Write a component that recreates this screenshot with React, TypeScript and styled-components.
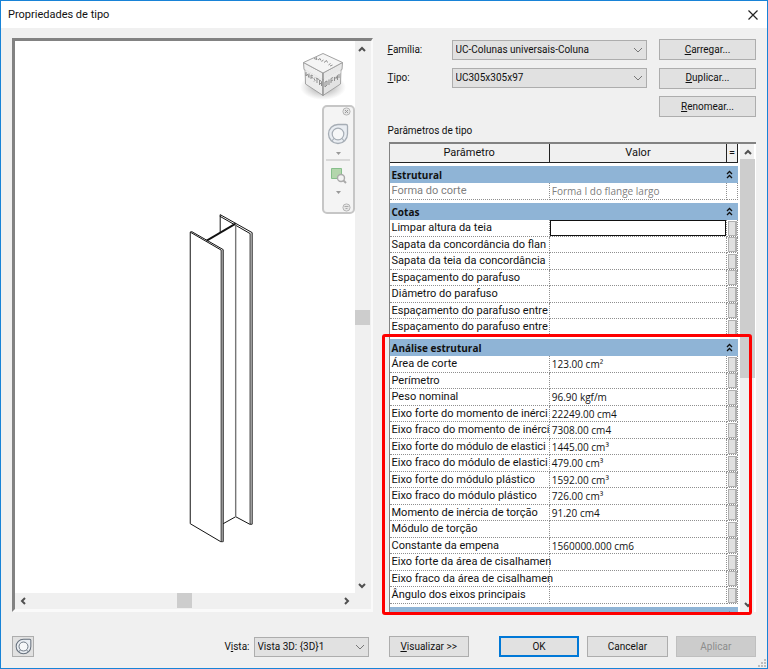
import React from "react";
import styled, { createGlobalStyle, css } from "styled-components";

const GlobalStyle = createGlobalStyle`
  *, *::before, *::after { box-sizing: border-box; }
  html, body { margin: 0; padding: 0; }
  body { background: #f0f0f0; color: #111; font: 10px/14px Roboto, "Liberation Sans", sans-serif; }
  button, select, input { font: inherit; color: inherit; margin: 0; padding: 0; border-radius: 0; }
`;

const Dialog = styled.main`
  display: flex;
  flex-direction: column;
  height: 100vh;
  background: #f0f0f0;
  border: 1px solid #1883d7;
  position: relative;
`;

const TitleBar = styled.header`
  display: flex;
  align-items: center;
  justify-content: space-between;
  flex: none;
  height: 27px;
  padding: 0 8px 0 7px;
  background: #fff;
`;

const Title = styled.h1`
  margin: 0;
  font: 400 11px/16px Roboto, "Liberation Sans", sans-serif;
`;

const PlainButton = styled.button`
  display: flex;
  align-items: center;
  justify-content: center;
  border: 0;
  background: none;
`;

const Body = styled.div`
  display: grid;
  grid-template-columns: minmax(0, 361fr) minmax(0, 369fr);
  column-gap: 15px;
  flex: 1;
  min-height: 0;
  padding: 10px 11px 0 11px;
`;

const Preview = styled.section`
  display: grid;
  grid-template-columns: minmax(0, 1fr) 16px;
  grid-template-rows: minmax(0, 1fr) 16px;
  min-height: 0;
  border-style: solid;
  border-width: 3px 2px 3px 3px;
  border-color: #828282 #fafafa #fafafa #828282;
`;

const Viewport = styled.div`
  position: relative;
  min-width: 0;
  min-height: 0;
  background: #fff;
`;

const Drawing = styled.svg`
  display: block;
  width: 100%;
  height: 100%;
`;

const ViewCube = styled.svg`
  position: absolute;
  top: 8px;
  right: 8px;
`;

const NavBar = styled.nav`
  position: absolute;
  top: 64px;
  right: 0;
  display: flex;
  flex-direction: column;
  align-items: center;
  width: 33px;
  height: 109px;
  border: 2px solid #c6c6c6;
  border-radius: 5px;
  background: #f4f4f4;
`;

const NavCorner = styled(PlainButton)`
  align-self: flex-end;
  width: 9px;
  height: 9px;
  margin: 0 2px;
`;

const NavTool = styled(PlainButton)<{ $gap: number }>`
  margin-top: ${(p) => p.$gap}px;
`;

const NavRule = styled.hr`
  width: 24px;
  height: 2px;
  margin: 4px 0 6px;
  border: 0;
  background: #d8d8d8;
`;

const Spacer = styled.div`
  flex: 1;
`;

const Track = styled.div<{ $axis: "x" | "y" }>`
  display: flex;
  flex-direction: ${(p) => (p.$axis === "x" ? "row" : "column")};
  min-height: 0;
  background: #f0f0f0;
`;

const ArrowButton = styled(PlainButton)`
  flex: none;
  width: 15px;
  height: 15px;
`;

const Gap = styled.div<{ $grow: number }>`
  flex: ${(p) => p.$grow} 1 0;
`;

const Thumb = styled.div<{ $grow?: number }>`
  flex: ${(p) => (p.$grow ? `${p.$grow} 1 0` : "none")};
  width: 15px;
  height: 15px;
  background: #cdcdcd;
`;

const Settings = styled.section`
  display: flex;
  flex-direction: column;
  min-width: 0;
  min-height: 0;
`;

const Form = styled.div`
  display: grid;
  grid-template-columns: 64px minmax(0, 1fr) 97px;
  grid-template-rows: 21px 20px 21px;
  column-gap: 12px;
  row-gap: 8px;
  align-items: center;
  margin-top: 1px;
`;

const FieldLabel = styled.label`
  white-space: nowrap;
`;

const controlBox = css`
  border: 1px solid #adadad;
  background: #e1e1e1;
`;

const SelectWrap = styled.div<{ $wide?: boolean }>`
  display: grid;
  align-items: center;
  ${(p) => (p.$wide ? "margin-left: -12px;" : "width: 115px;")}

  > * { grid-area: 1 / 1; }
  > svg { justify-self: end; margin-right: 4px; pointer-events: none; }
`;

const Select = styled.select`
  ${controlBox}
  appearance: none;
  width: 100%;
  height: 20px;
  padding: 0 18px 0 3px;
  text-overflow: ellipsis;
`;

const PushButton = styled.button<{ $kind?: "default" | "normal" }>`
  ${controlBox}
  height: 21px;
  text-align: center;
  white-space: nowrap;
  ${(p) => p.$kind === "default" && "border: 2px solid #0078d7;"}

  &:disabled {
    border-color: #bfbfbf;
    background: #ccc;
    color: #8c8c8c;
  }
`;

const FormButton = styled(PushButton)`
  grid-column: 3;
`;

const Caption = styled.h2`
  margin: 7px 0 4px;
  font: 400 10px/14px Roboto, "Liberation Sans", sans-serif;
`;

const GridBox = styled.div`
  position: relative;
  display: grid;
  grid-template-columns: minmax(0, 1fr) 18px;
  flex: 1;
  min-height: 0;
  margin-left: 1px;
  border-style: solid;
  border-width: 2px 0 0 1px;
  border-color: #828282;
  background: #fff;
`;

const GridClip = styled.div`
  min-height: 0;
  overflow: hidden;
`;

const GridTrack = styled(Track)`
  width: 14px;
  margin-left: 2px;
`;

const Table = styled.table`
  width: 100%;
  table-layout: fixed;
  border-collapse: separate;
  border-spacing: 0;
  white-space: nowrap;
`;

const HeadCell = styled.th`
  height: 19px;
  padding: 0;
  border-right: 1px solid #222;
  border-bottom: 1px solid #222;
  background: #f0f0f0;
  font: 400 11px/16px Roboto, "Liberation Sans", sans-serif;
`;

const Group = styled.tbody`
  tr:nth-child(even) td { height: 17px; }
  tr:nth-child(odd) td { height: 16px; }
`;

const GroupHead = styled.th`
  height: 20px;
  padding: 0 2px;
  border-top: 3px solid #fff;
  background: #8fb4d6;
  text-align: left;
  font: 700 10px/16px "Open Sans", "Noto Sans", sans-serif;

  > div { display: flex; justify-content: space-between; align-items: center; }
`;

const FoldButton = styled(PlainButton)`
  width: 13px;
  height: 16px;
`;

const Cell = styled.td<{ $muted?: boolean; $value?: boolean }>`
  padding: 0 0 0 2px;
  border-right: 1px dotted #8f8f8f;
  border-bottom: 1px dotted #8f8f8f;
  color: ${(p) => (p.$muted ? "#808080" : "#111")};
  font: ${(p) =>
    p.$value
      ? '400 10px/14px "Open Sans", "Noto Sans", sans-serif'
      : '400 11px/14px Roboto, "Liberation Sans", sans-serif'};
`;

const EditCell = styled(Cell)`
  padding: 0;
`;

const ValueInput = styled.input`
  display: block;
  width: 100%;
  height: 16px;
  padding: 0 2px;
  border: 1px solid #111;
  background: #fff;
  outline: none;
`;

const LinkCell = styled.td`
  padding: 0;
  border-right: 1px dotted #8f8f8f;
  border-bottom: 1px dotted #8f8f8f;
`;

const LinkButton = styled.button`
  display: block;
  width: 9px;
  height: 15px;
  margin-left: 1px;
  border: 1px solid #b0b0b0;
  border-right-width: 2px;
  background: #e1e1e1;
`;

const Highlight = styled.div`
  position: absolute;
  top: 190px;
  right: 4px;
  bottom: -3px;
  left: -8px;
  border: 3px solid #fe0000;
  border-radius: 3px;
  pointer-events: none;
`;

const Footer = styled.footer`
  display: grid;
  grid-template-columns: minmax(0, 361fr) minmax(0, 369fr);
  column-gap: 15px;
  align-items: center;
  flex: none;
  padding: 24px 11px 11px 11px;
`;

const FooterLeft = styled.div`
  display: flex;
  align-items: center;
  gap: 4px;
  margin-right: 4px;
`;

const WheelButton = styled.button`
  ${controlBox}
  display: flex;
  align-items: center;
  justify-content: center;
  width: 22px;
  height: 21px;
  margin-right: auto;
`;

const FooterRight = styled.div`
  display: grid;
  grid-template-columns: 1fr 14px 1fr 1fr 1fr;
  column-gap: 8px;
  margin-left: 1px;

  > :nth-child(2) { grid-column: 3; }
`;

const Grip = styled.svg`
  position: absolute;
  right: 1px;
  bottom: 1px;
`;

const Key = styled.u`
  text-underline-offset: 1px;
`;

type Dir = "up" | "down" | "left" | "right";
const arrows: Record<Dir, string> = {
  up: "M2 7L5 4L8 7",
  down: "M2 3L5 6L8 3",
  left: "M7 2L4 5L7 8",
  right: "M3 2L6 5L3 8",
};

function Arrow({ dir, thin }: { dir: Dir; thin?: boolean }) {
  return (
    <svg width="10" height="10" viewBox="0 0 10 10" fill="none" stroke={thin ? "#777" : "#505050"} strokeWidth={thin ? 1 : 2} aria-hidden>
      <path d={thin ? "M1 3L5 7L9 3" : arrows[dir]} />
    </svg>
  );
}

function Wheel({ size, stroke }: { size: number; stroke: string }) {
  return (
    <svg width={size} height={size} viewBox="0 0 22 22" fill="none" stroke={stroke} aria-hidden>
      <path d="M11 1.500H19Q20.500 1.500 20.500 3V11A9.500 9.500 0 1 1 11 1.500Z" fill="#e9edf2" strokeWidth="1.300" />
      <circle cx="11" cy="11" r="5.800" fill="#f6f7f8" strokeWidth="1.200" />
      <path d="M7 15.500L4.800 18M15 15.500L17.200 18" strokeWidth="1.100" />
    </svg>
  );
}

function Beam() {
  return (
    <Drawing viewBox="15 41 340 552" role="img" aria-label="Vista 3D da coluna" fill="none" stroke="#111" strokeWidth="1">
      <path d="M220.500 232V214.500L252.500 232.500V524.500H250L236 517L223.500 524" />
      <path d="M220 216L250.500 233.500V524.500" />
      <path d="M236 223.500L207 240.500" strokeWidth="1.800" />
      <path d="M236 224V517" stroke="#777" strokeWidth="1.400" />
      <path d="M190.500 232V524L221 542H223.500V249.500L192 231.500L190.500 232L221.500 250V542" />
      <path d="M222.500 250V542" stroke="#888" />
      <path d="M251.500 233V524" stroke="#999" />
    </Drawing>
  );
}

function Cube() {
  return (
    <ViewCube width="48" height="52" viewBox="0 0 48 52" role="img" aria-label="Cubo de visualização">
      <defs>
        <radialGradient id="cubeShadow">
          <stop offset="0" stopColor="#777" stopOpacity=".8" />
          <stop offset="1" stopColor="#999" stopOpacity="0" />
        </radialGradient>
      </defs>
      <ellipse cx="24" cy="38" rx="23" ry="13" fill="url(#cubeShadow)" />
      <g stroke="#a2a2a2" strokeWidth="1" strokeLinejoin="round">
        <path d="M6 19L24 29V46.500L6.500 35Z" fill="#ececec" />
        <path d="M42 19L24 29V46.500L41.500 35Z" fill="#e2e2e2" />
        <path d="M4.500 13.500L24 24V31L5 20.500Z" fill="#efefef" />
        <path d="M43.500 13.500L24 24V31L43 20.500Z" fill="#e8e8e8" />
        <path d="M24 4.500L43.500 13.500L24 24L4.500 13.500Z" fill="#f5f5f5" />
        <path d="M24 24V46.500" stroke="#8d8d8d" />
      </g>
      <path d="M6.500 20.500L23 29.500V33L6.500 24ZM41.500 20.500L25 29.500V33L41.500 24Z" fill="#ebebeb" />
      <g stroke="#8f8f8f" strokeWidth="1" fill="none">
        <path d="M7 23v4l1.500-2 1.500 3.500v-4M12 26v4M12 26l2 1M12 28l2 1M16 28.500l-1 1 1 2-1 1M18 29v5M17 29l3 1.500M20.500 36V31l2 1.500v4.500M20.500 34l2 1" />
        <path d="M26 33v5l2-2v-4zM30 30.500V36M32 34V29.500l2-1M32 32l2-1M35.500 32V28l1.500 1.500 1.500-3V31M40 25v4" />
        <path d="M15 9.500l3 1-1-2.500M19 11l2-1.500 1 2M22.500 12.500l2-1.500M25 13.500l2.500-2 1 2M29.500 16l2-1.500M31 17l2.500-1" />
      </g>
    </ViewCube>
  );
}

function CornerIcon({ kind }: { kind: "close" | "menu" }) {
  return (
    <svg width="9" height="9" viewBox="0 0 9 9" fill="none" stroke="#b5b5b5" aria-hidden>
      <circle cx="4.500" cy="4.500" r="3.600" fill="#e6e6e6" />
      {kind === "close" ? <path d="M3 3L6 6M6 3L3 6" stroke="#999" /> : <path d="M2.500 3.500H6.500M3.500 5.500H5.500" stroke="#aaa" />}
    </svg>
  );
}

function DropMark() {
  return (
    <svg width="5" height="3" viewBox="0 0 5 3" aria-hidden>
      <path d="M0 0H5L2.500 3Z" fill="#999" />
    </svg>
  );
}

function Fold() {
  return (
    <svg width="7" height="9" viewBox="0 0 7 9" fill="none" stroke="#111" strokeWidth="1.300" aria-hidden>
      <path d="M1 4L3.500 1.500L6 4M1 8L3.500 5.500L6 8" />
    </svg>
  );
}

type Row = { name: string; value?: string; state?: "muted" | "editing" };
const groups: { title: string; rows: Row[] }[] = [
  { title: "Estrutural", rows: [{ name: "Forma do corte", value: "Forma I do flange largo", state: "muted" }] },
  {
    title: "Cotas",
    rows: [
      { name: "Limpar altura da teia", state: "editing" },
      { name: "Sapata da concordância do flan" },
      { name: "Sapata da teia da concordância" },
      { name: "Espaçamento do parafuso" },
      { name: "Diâmetro do parafuso" },
      { name: "Espaçamento do parafuso entre" },
      { name: "Espaçamento do parafuso entre" },
    ],
  },
  {
    title: "Análise estrutural",
    rows: [
      { name: "Área de corte", value: "123.00 cm²" },
      { name: "Perímetro" },
      { name: "Peso nominal", value: "96.90 kgf/m" },
      { name: "Eixo forte do momento de inérci", value: "22249.00 cm4" },
      { name: "Eixo fraco do momento de inérci", value: "7308.00 cm4" },
      { name: "Eixo forte do módulo de elastici", value: "1445.00 cm³" },
      { name: "Eixo fraco do módulo de elastici", value: "479.00 cm³" },
      { name: "Eixo forte do módulo plástico", value: "1592.00 cm³" },
      { name: "Eixo fraco do módulo plástico", value: "726.00 cm³" },
      { name: "Momento de inércia de torção", value: "91.20 cm4" },
      { name: "Módulo de torção" },
      { name: "Constante da empena", value: "1560000.000 cm6" },
      { name: "Eixo forte da área de cisalhamen" },
      { name: "Eixo fraco da área de cisalhamen" },
      { name: "Ângulo dos eixos principais" },
    ],
  },
  { title: "Geometria estrutural da seção", rows: [] },
];

function ParameterRow({ row }: { row: Row }) {
  const muted = row.state === "muted";
  return (
    <tr>
      <Cell $muted={muted}>{row.name}</Cell>
      {row.state === "editing" ? (
        <EditCell>
          <ValueInput aria-label={row.name} />
        </EditCell>
      ) : (
        <Cell $muted={muted} $value>{row.value}</Cell>
      )}
      <LinkCell>{!muted && <LinkButton aria-label={`Associar ${row.name}`} />}</LinkCell>
    </tr>
  );
}

export default function App() {
  return (
    <>
      <GlobalStyle />
      <Dialog>
        <TitleBar>
          <Title>Propriedades de tipo</Title>
          <PlainButton aria-label="Fechar">
            <svg width="12" height="12" viewBox="0 0 12 12" stroke="#222" strokeWidth="1.200" aria-hidden>
              <path d="M1.500 1.500L10.500 10.500M10.500 1.500L1.500 10.500" />
            </svg>
          </PlainButton>
        </TitleBar>

        <Body>
          <Preview>
            <Viewport>
              <Beam />
              <Cube />
              <NavBar>
                <NavCorner aria-label="Fechar barra"><CornerIcon kind="close" /></NavCorner>
                <NavTool $gap={7} aria-label="Roda de navegação"><Wheel size={22} stroke="#a6adb5" /></NavTool>
                <NavTool $gap={7} aria-label="Opções da roda"><DropMark /></NavTool>
                <NavRule />
                <NavTool $gap={0} aria-label="Zoom na região">
                  <svg width="17" height="17" viewBox="0 0 17 17" aria-hidden>
                    <path d="M1.500 1.500H11.500V11.500H1.500Z" fill="#b3d6ac" stroke="#86bf8b" />
                    <circle cx="11" cy="11" r="3.500" fill="#f2f2f2" stroke="#aaa" strokeWidth="1.400" />
                    <path d="M13.500 13.500L16 16" stroke="#aaa" strokeWidth="2" />
                  </svg>
                </NavTool>
                <NavTool $gap={7} aria-label="Opções de zoom"><DropMark /></NavTool>
                <Spacer />
                <NavCorner aria-label="Personalizar barra"><CornerIcon kind="menu" /></NavCorner>
              </NavBar>
            </Viewport>
            <Track $axis="y">
              <ArrowButton aria-label="Rolar para cima"><Arrow dir="up" /></ArrowButton>
              <Gap $grow={253} />
              <Thumb />
              <Gap $grow={253} />
              <ArrowButton aria-label="Rolar para baixo"><Arrow dir="down" /></ArrowButton>
            </Track>
            <Track $axis="x">
              <ArrowButton aria-label="Rolar para a esquerda"><Arrow dir="left" /></ArrowButton>
              <Gap $grow={147} />
              <Thumb />
              <Gap $grow={147} />
              <ArrowButton aria-label="Rolar para a direita"><Arrow dir="right" /></ArrowButton>
            </Track>
          </Preview>

          <Settings>
            <Form>
              <FieldLabel htmlFor="familia"><Key>F</Key>amília:</FieldLabel>
              <SelectWrap $wide>
                <Select id="familia"><option>UC-Colunas universais-Coluna</option></Select>
                <Arrow dir="down" thin />
              </SelectWrap>
              <FormButton><Key>C</Key>arregar...</FormButton>
              <FieldLabel htmlFor="tipo"><Key>T</Key>ipo:</FieldLabel>
              <SelectWrap $wide>
                <Select id="tipo"><option>UC305x305x97</option></Select>
                <Arrow dir="down" thin />
              </SelectWrap>
              <FormButton><Key>D</Key>uplicar...</FormButton>
              <FormButton><Key>R</Key>enomear...</FormButton>
            </Form>

            <Caption>Parâmetros de tipo</Caption>

            <GridBox>
              <GridClip>
                <Table>
                  <colgroup>
                    <col width="46%" />
                    <col />
                    <col width="11" />
                  </colgroup>
                  <thead>
                    <tr>
                      <HeadCell>Parâmetro</HeadCell>
                      <HeadCell>Valor</HeadCell>
                      <HeadCell>=</HeadCell>
                    </tr>
                  </thead>
                  {groups.map((group) => (
                    <Group key={group.title}>
                      <tr>
                        <GroupHead colSpan={3}>
                          <div>
                            {group.title}
                            <FoldButton aria-label={`Recolher ${group.title}`}><Fold /></FoldButton>
                          </div>
                        </GroupHead>
                      </tr>
                      {group.rows.map((row, i) => <ParameterRow key={i} row={row} />)}
                    </Group>
                  ))}
                </Table>
              </GridClip>
              <GridTrack $axis="y">
                <ArrowButton aria-label="Rolar para cima"><Arrow dir="up" /></ArrowButton>
                <Thumb $grow={218} />
                <Gap $grow={219} />
                <ArrowButton aria-label="Rolar para baixo"><Arrow dir="down" /></ArrowButton>
              </GridTrack>
              <Highlight />
            </GridBox>
          </Settings>
        </Body>

        <Footer>
          <FooterLeft>
            <WheelButton aria-label="Roda de navegação"><Wheel size={17} stroke="#66707c" /></WheelButton>
            <FieldLabel htmlFor="vista">V<Key>i</Key>sta:</FieldLabel>
            <SelectWrap>
              <Select id="vista"><option>Vista 3D: {"{3D}"}1</option></Select>
              <Arrow dir="down" thin />
            </SelectWrap>
          </FooterLeft>
          <FooterRight>
            <PushButton><Key>V</Key>isualizar &gt;&gt;</PushButton>
            <PushButton $kind="default">OK</PushButton>
            <PushButton>Cancelar</PushButton>
            <PushButton disabled>Aplicar</PushButton>
          </FooterRight>
        </Footer>
        <Grip width="8" height="8" viewBox="0 0 8 8" fill="#bdbdbd" aria-hidden>
          <path d="M6 0h2v2H6zM3 3h2v2H3zM6 3h2v2H6zM0 6h2v2H0zM3 6h2v2H3zM6 6h2v2H6z" />
        </Grip>
      </Dialog>
    </>
  );
}
